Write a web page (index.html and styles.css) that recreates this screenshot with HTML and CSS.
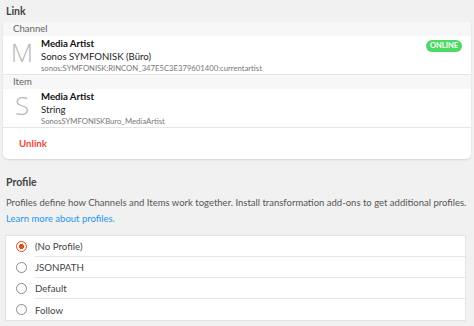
FILE: index.html
```html
<!DOCTYPE html>
<html>
<head>
<meta charset="utf-8">
<link rel="stylesheet" href="styles.css">
</head>
<body>
<div class="page">
  <div class="block-title">Link</div>
  <div class="card">
    <div class="group-title">Channel</div>
    <div class="item">
      <div class="avatar">M</div>
      <div class="item-body">
        <div class="row-top">
          <div class="title">Media Artist</div>
          <span class="badge">ONLINE</span>
        </div>
        <div class="subtitle">Sonos SYMFONISK (Büro)</div>
        <div class="footer">sonos:SYMFONISK:RINCON_347E5C3E379601400:currentartist</div>
      </div>
    </div>
    <div class="group-title">Item</div>
    <div class="item">
      <div class="avatar">S</div>
      <div class="item-body">
        <div class="row-top">
          <div class="title">Media Artist</div>
        </div>
        <div class="subtitle">String</div>
        <div class="footer">SonosSYMFONISKBuro_MediaArtist</div>
      </div>
    </div>
    <div class="unlink">Unlink</div>
  </div>

  <div class="block-title profile-title">Profile</div>
  <div class="desc">Profiles define how Channels and Items work together. Install transformation add-ons to get additional profiles.<br><a class="more">Learn more about profiles.</a></div>

  <div class="radio-list">
    <div class="radio-row"><span class="radio checked"></span><span class="radio-label">(No Profile)</span></div>
    <div class="radio-row"><span class="radio"></span><span class="radio-label">JSONPATH</span></div>
    <div class="radio-row"><span class="radio"></span><span class="radio-label">Default</span></div>
    <div class="radio-row"><span class="radio"></span><span class="radio-label">Follow</span></div>
  </div>
</div>
</body>
</html>
```

FILE: styles.css
```css
html, body {
  margin: 0;
  padding: 0;
  background: #f1f1f1;
  font-family: Lato, "Open Sans", sans-serif;
  color: #222;
}
.page {
  width: 474px;
  height: 326px;
  overflow: hidden;
}
.block-title {
  font-size: 10.5px;
  font-weight: 700;
  color: #444;
  padding: 5px 0 0 6px;
  height: 17px;
}
.card {
  margin: 0 3px 0 3px;
  background: #fff;
  border-radius: 0 0 5px 5px;
  box-shadow: 0 1px 2px rgba(0,0,0,0.12);
}
.group-title {
  background: #f7f7f7;
  color: #666;
  font-size: 9.6px;
  height: 14px;
  line-height: 14px;
  padding-left: 10px;
}
.item {
  display: flex;
  height: 38px;
  border-bottom: 1px solid #e6e6e6;
}
.avatar {
  width: 38px;
  text-align: center;
  font-family: "Open Sans", sans-serif;
  font-size: 26px;
  font-weight: 300;
  color: #b8b8b8;
  line-height: 30px;
  padding-top: 1px;
}
.item-body {
  flex: 1;
  padding-top: 1px;
  padding-right: 9px;
}
.row-top {
  display: flex;
  justify-content: space-between;
  align-items: center;
  height: 13px;
}
.title {
  font-size: 9.6px;
  font-weight: 700;
  color: #111;
}
.badge {
  background: #4cd964;
  color: #fff;
  font-size: 7.5px;
  font-weight: 700;
  border-radius: 7px;
  padding: 0 4px;
  line-height: 12px;
  margin-top: 4px;
}
.subtitle {
  font-size: 9.6px;
  color: #222;
  line-height: 13px;
}
.footer {
  font-size: 7.7px;
  color: #777;
  line-height: 11px;
}
.unlink {
  color: #f44336;
  font-size: 9.7px;
  font-weight: 700;
  padding-left: 16px;
  height: 31px;
  line-height: 31px;
}
.profile-title {
  padding-top: 17px;
  height: 18px;
}
.desc {
  font-size: 9.5px;
  color: #555;
  padding-left: 6px;
  padding-top: 1px;
  line-height: 16px;
  white-space: nowrap;
}
.more {
  color: #2196f3;
}
.radio-list {
  margin: 8px 8px 0 5px;
  background: #fff;
  border: 1px solid #e4e4e4;
}
.radio-row {
  display: flex;
  align-items: center;
  height: 21px;
}
.radio {
  width: 11px;
  height: 11px;
  border: 1.2px solid #8a8a8a;
  border-radius: 50%;
  margin-left: 10px;
  margin-right: 8px;
  box-sizing: border-box;
  flex: none;
}
.radio.checked {
  border: 1.5px solid #e64a19;
  background: radial-gradient(circle, #e64a19 0 2.4px, #fff 2.7px);
}
.radio-label {
  flex: 1;
  font-size: 9.7px;
  color: #444;
  height: 20px;
  line-height: 20px;
  border-bottom: 1px solid #e6e6e6;
}
.radio-row:last-child .radio-label {
  border-bottom: none;
}
```
